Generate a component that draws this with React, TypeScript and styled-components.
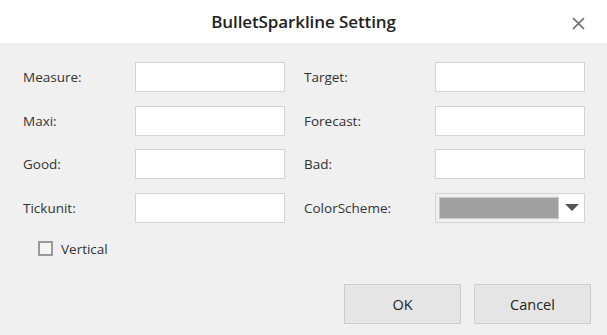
import React from "react";
import styled, { createGlobalStyle } from "styled-components";

const Global = createGlobalStyle`
  html, body { margin: 0; padding: 0; background: #f0f0f0; }
  body { font-family: "Open Sans", "Noto Sans", "Liberation Sans", sans-serif; color: #333; }
  * { box-sizing: border-box; }
`;

const Dialog = styled.div`
  width: 607px;
  height: 335px;
  display: flex;
  flex-direction: column;
  background: #f0f0f0;
  overflow: hidden;
`;

const Header = styled.div`
  height: 43px;
  flex: none;
  background: #fff;
  display: flex;
  align-items: center;
  justify-content: center;
  position: relative;
`;

const Title = styled.div`
  font-size: 17px;
  font-weight: 600;
  color: #222;
  letter-spacing: -0.1px;
  margin-top: -1px;
`;

const CloseButton = styled.button`
  position: absolute;
  right: 22px;
  top: 16px;
  width: 14px;
  height: 14px;
  padding: 0;
  border: none;
  background: transparent;
  display: flex;
  align-items: center;
  justify-content: center;
`;

const Body = styled.div`
  flex: 1;
  display: flex;
  flex-direction: column;
  padding: 19px 16px 11px 23px;
`;

const FormGrid = styled.div`
  display: grid;
  grid-template-columns: 262px 281px;
  column-gap: 19px;
  row-gap: 13.5px;
`;

const Field = styled.div`
  display: flex;
  align-items: center;
  height: 30px;
`;

const Label = styled.label<{ $w: number }>`
  width: ${(p) => p.$w}px;
  flex: none;
  font-size: 13.5px;
  color: #333;
`;

const TextInput = styled.input`
  width: 150px;
  height: 30px;
  border: 1px solid #d4d4d4;
  background: #fff;
  outline: none;
  padding: 0 4px;
  font: inherit;
`;

const Select = styled.div`
  width: 150px;
  height: 30px;
  border: 1px solid #d4d4d4;
  background: #f0f0f0;
  display: flex;
  align-items: stretch;
  padding: 3px 0 3px 3px;
`;

const Swatch = styled.div`
  flex: 1;
  background: #a0a0a0;
  border: 1px solid #c8c8c8;
`;

const Arrow = styled.div`
  width: 25px;
  margin: -3px 0;
  background: #fff;
  display: flex;
  align-items: center;
  justify-content: center;
`;

const CheckRow = styled.label`
  display: flex;
  align-items: center;
  gap: 8px;
  margin: 17px 0 0 15px;
  font-size: 13.5px;
  color: #333;
`;

const Box = styled.span`
  width: 15px;
  height: 15px;
  border: 2px solid #999;
  background: #f4f4f4;
  display: inline-block;
`;

const Footer = styled.div`
  margin-top: auto;
  display: flex;
  justify-content: flex-end;
  gap: 13px;
`;

const Button = styled.button`
  width: 117px;
  height: 40px;
  background: #e5e5e5;
  border: 1px solid #cccccc;
  font-family: inherit;
  font-size: 14.5px;
  color: #222;
  padding: 0;
`;

const fields: [string, string][] = [
  ["Measure:", "Target:"],
  ["Maxi:", "Forecast:"],
  ["Good:", "Bad:"],
];

export default function App() {
  return (
    <Dialog>
      <Global />
      <Header>
        <Title>BulletSparkline Setting</Title>
        <CloseButton aria-label="close">
          <svg width="13" height="13" viewBox="0 0 13 13">
            <path d="M1 1L12 12M12 1L1 12" stroke="#666" strokeWidth="1.6" fill="none" />
          </svg>
        </CloseButton>
      </Header>
      <Body>
        <FormGrid>
          {fields.map(([l, r]) => (
            <React.Fragment key={l}>
              <Field>
                <Label $w={112}>{l}</Label>
                <TextInput />
              </Field>
              <Field>
                <Label $w={131}>{r}</Label>
                <TextInput />
              </Field>
            </React.Fragment>
          ))}
          <Field>
            <Label $w={112}>Tickunit:</Label>
            <TextInput />
          </Field>
          <Field>
            <Label $w={131}>ColorScheme:</Label>
            <Select>
              <Swatch />
              <Arrow>
                <svg width="14" height="7" viewBox="0 0 14 7">
                  <path d="M0 0H14L7 7Z" fill="#555" />
                </svg>
              </Arrow>
            </Select>
          </Field>
        </FormGrid>
        <CheckRow>
          <Box />
          Vertical
        </CheckRow>
        <Footer>
          <Button>OK</Button>
          <Button>Cancel</Button>
        </Footer>
      </Body>
    </Dialog>
  );
}
